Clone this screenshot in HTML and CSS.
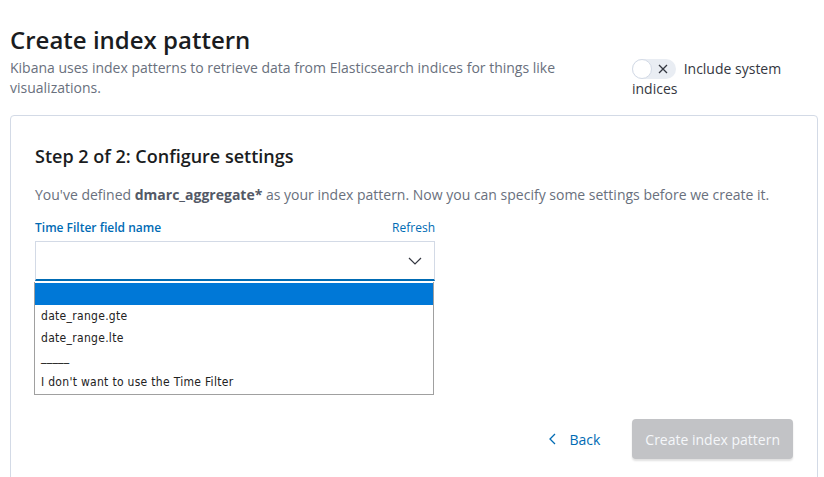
FILE: index.html
```html
<!DOCTYPE html>
<html lang="en">
<head>
    <meta charset="UTF-8">
    <title>Create index pattern</title>
    <link rel="stylesheet" href="styles.css">
</head>
<body>
    <div class="page">
        <div class="header">
            <div class="intro">
                <h1>Create index pattern</h1>
                <p>Kibana uses index patterns to retrieve data from Elasticsearch indices for things like visualizations.</p>
            </div>
            <div class="system-toggle">
                <span class="switch">
                    <span class="knob"></span>
                    <svg class="switch-x" width="12" height="12" viewBox="0 0 12 12"><path d="M2 2 L10 10 M10 2 L2 10" stroke="#343741" stroke-width="1.3" fill="none"/></svg>
                </span>
                Include system indices
            </div>
        </div>

        <div class="panel">
            <h2>Step 2 of 2: Configure settings</h2>
            <p class="desc">You've defined <b>dmarc_aggregate*</b> as your index pattern. Now you can specify some settings before we create it.</p>

            <div class="field">
                <div class="field-label">
                    <span>Time Filter field name</span>
                    <a href="#">Refresh</a>
                </div>
                <div class="select">
                    <svg class="chevron" width="14" height="8" viewBox="0 0 14 8"><path d="M1 1 L7 7 L13 1" stroke="#343741" stroke-width="1.2" fill="none"/></svg>
                </div>
                <ul class="options">
                    <li class="active">&nbsp;</li>
                    <li>date_range.gte</li>
                    <li>date_range.lte</li>
                    <li><span class="divider">_____</span></li>
                    <li>I don't want to use the Time Filter</li>
                </ul>
            </div>

            <div class="actions">
                <a href="#" class="back">
                    <svg width="8" height="12" viewBox="0 0 8 12"><path d="M6 1 L1 6 L6 11" stroke="#006bb4" stroke-width="1.3" fill="none"/></svg>
                    Back
                </a>
                <button disabled>Create index pattern</button>
            </div>
        </div>
    </div>
</body>
</html>
```

FILE: styles.css
```css
body {
    margin: 0;
    font-family: 'Open Sans', sans-serif;
    color: #343741;
    background: #fff;
}

.page {
    padding: 24px 6px 0 10px;
}

.header {
    display: flex;
    justify-content: space-between;
}

.intro {
    width: 580px;
}

h1 {
    font-size: 24px;
    font-weight: 600;
    line-height: 32px;
    margin: 0;
    color: #1a1c21;
}

.intro p {
    font-size: 14px;
    line-height: 20px;
    color: #69707d;
    margin: 2px 0 0;
}

.system-toggle {
    width: 186px;
    margin-top: 35px;
    font-size: 14px;
    line-height: 20px;
    color: #343741;
}

.switch {
    display: inline-flex;
    align-items: center;
    justify-content: space-between;
    width: 44px;
    height: 20px;
    border-radius: 10px;
    background: #e9edf3;
    vertical-align: -5px;
    margin-right: 4px;
}

.knob {
    width: 20px;
    height: 20px;
    box-sizing: border-box;
    border-radius: 50%;
    background: #fff;
    border: 1px solid #d3dae6;
}

.switch-x {
    margin-right: 7px;
}

.panel {
    margin-top: 16px;
    border: 1px solid #d3dae6;
    border-radius: 4px;
    padding: 24px;
    height: 330px;
}

h2 {
    font-size: 18px;
    font-weight: 600;
    line-height: 24px;
    margin: 4px 0 0;
    color: #1a1c21;
}

.desc {
    font-size: 14px;
    line-height: 20px;
    color: #69707d;
    margin: 17px 0 0;
}

.desc b {
    color: #535966;
    font-weight: 700;
}

.field {
    width: 400px;
    margin-top: 14px;
}

.field-label {
    display: flex;
    justify-content: space-between;
    font-size: 12px;
    line-height: 18px;
    font-weight: 600;
    color: #006bb4;
}

.field-label a {
    font-weight: 400;
    color: #006bb4;
    text-decoration: none;
}

.select {
    margin-top: 4px;
    height: 37px;
    border: 1px solid #d3dae6;
    border-bottom: 2px solid #006bb4;
    display: flex;
    align-items: center;
    justify-content: flex-end;
    padding-right: 12px;
}

.options {
    list-style: none;
    box-sizing: border-box;
    width: 400px;
    margin: 1px 0 0 -1px;
    padding: 1px 0 1px;
    border: 1px solid #a0a0a0;
    border-top: none;
    font-family: 'DejaVu Sans Condensed', 'DejaVu Sans', sans-serif;
    font-size: 12px;
    letter-spacing: 0.3px;
    color: #222;
}

.options li {
    height: 22px;
    line-height: 22px;
    padding-left: 6px;
}

.options li.active {
    background: #0078d7;
}

.divider {
    position: relative;
    top: -3px;
}

.actions {
    display: flex;
    justify-content: flex-end;
    align-items: center;
    gap: 32px;
    margin-top: 24px;
}

.back {
    display: flex;
    align-items: center;
    gap: 12px;
    font-size: 14px;
    color: #006bb4;
    text-decoration: none;
}

button {
    font-family: 'Open Sans', sans-serif;
    font-size: 14px;
    height: 40px;
    padding: 0 13px;
    border: none;
    border-radius: 4px;
    background: #c2c3c6;
    color: #f5f7fa;
    box-shadow: 0 2px 2px rgba(0,0,0,0.12);
}
```
